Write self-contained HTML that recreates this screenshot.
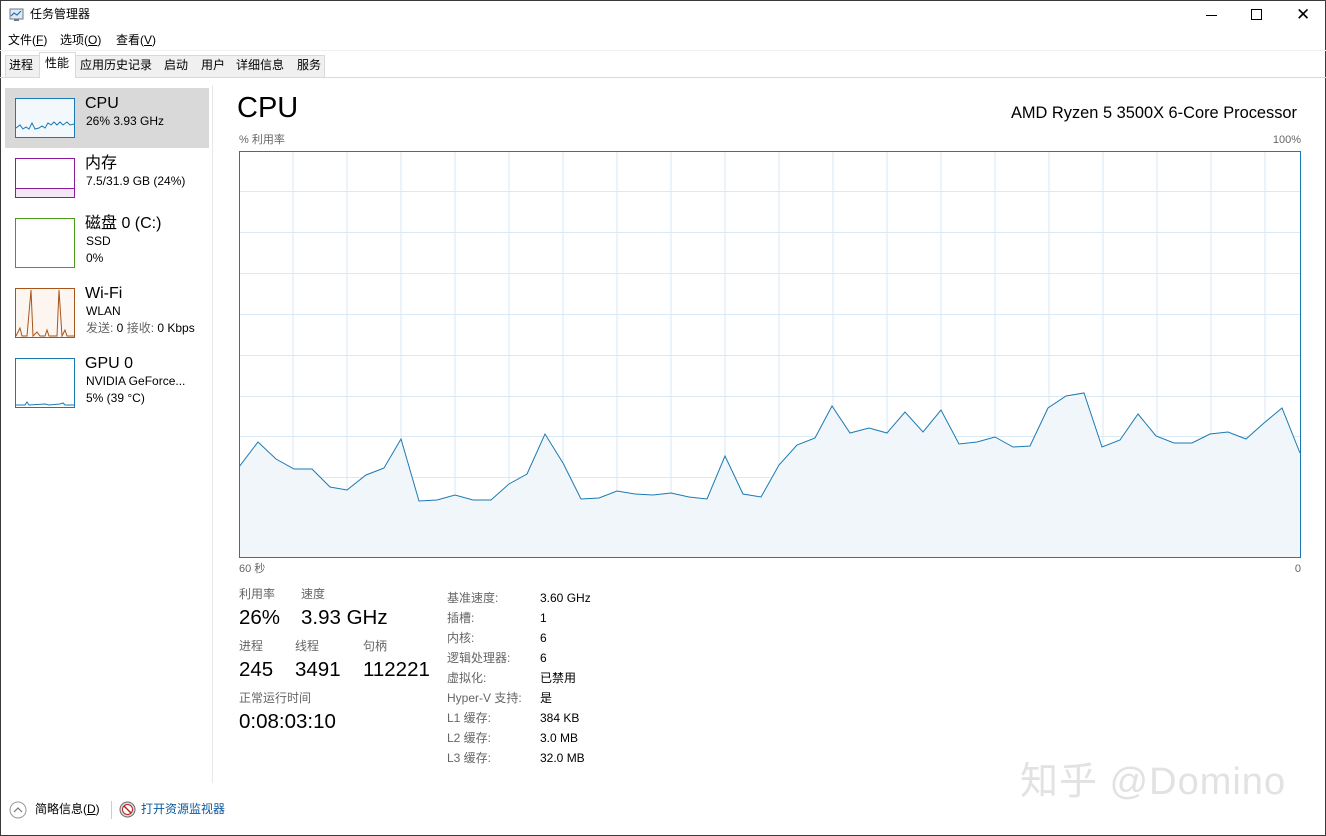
<!DOCTYPE html>
<html><head><meta charset="utf-8"><style>
*{margin:0;padding:0;box-sizing:border-box}
body{width:1326px;height:836px;background:#fff;position:relative;overflow:hidden;font-family:"Liberation Sans","Noto Sans CJK SC",sans-serif;color:#000}
.a{position:absolute;white-space:nowrap;line-height:1.15}
.g{color:#666}
</style></head><body>
<div class="a" style="left:0;top:0;width:1326px;height:836px;border:1px solid #3a3a3a"></div>
<svg class="a" style="left:9px;top:8px" width="16" height="14"><rect x="1" y="1" width="13" height="10" fill="#dfe9f3" stroke="#6a7b8c"/><polyline points="2,8 5,5 8,7 12,3" fill="none" stroke="#2a6cb0" stroke-width="1.2"/><rect x="5" y="11" width="5" height="2" fill="#6a7b8c"/></svg>
<div class="a" style="left:30px;top:8px;font-size:12px">任务管理器</div>
<div class="a" style="left:1206px;top:15px;width:11px;height:1px;background:#000"></div>
<div class="a" style="left:1251px;top:9px;width:11px;height:11px;border:1px solid #000"></div>
<div class="a" style="left:1296px;top:5px;font-size:17px;font-weight:300">✕</div>
<div class="a" style="left:8px;top:34px;font-size:12px">文件(<u>F</u>)</div>
<div class="a" style="left:60px;top:34px;font-size:12px">选项(<u>O</u>)</div>
<div class="a" style="left:116px;top:34px;font-size:12px">查看(<u>V</u>)</div>
<div class="a" style="left:0;top:50px;width:1326px;height:1px;background:#f0f0f0"></div>
<div class="a" style="left:0;top:77px;width:1326px;height:1px;background:#d9d9d9"></div>
<div class="a" style="left:5px;top:55px;width:320px;height:22px;background:#f0f0f0;border:1px solid #d9d9d9;border-bottom:none"></div>
<div class="a" style="left:39px;top:52px;width:37px;height:26px;background:#fff;border:1px solid #d9d9d9;border-bottom:none"></div>
<div class="a" style="left:9px;top:59px;font-size:12px">进程</div>
<div class="a" style="left:45px;top:57px;font-size:12px">性能</div>
<div class="a" style="left:80px;top:59px;font-size:12px">应用历史记录</div>
<div class="a" style="left:164px;top:59px;font-size:12px">启动</div>
<div class="a" style="left:201px;top:59px;font-size:12px">用户</div>
<div class="a" style="left:236px;top:59px;font-size:12px">详细信息</div>
<div class="a" style="left:297px;top:59px;font-size:12px">服务</div>
<div class="a" style="left:5px;top:88px;width:204px;height:60px;background:#d9d9d9"></div>
<div class="a" style="left:212px;top:85px;width:1px;height:698px;background:#e8e8e8"></div>
<svg class="a" style="left:15px;top:98px" width="60" height="40"><rect x="0.5" y="0.5" width="59" height="39" fill="#f3f8fc" stroke="#1a7ab3"/><polyline points="1,30 5,27 8,31 11,29 14,31 17,25 20,31 24,30 27,28 30,30 33,25 36,27 39,24 42,27 45,24 48,27 52,24 55,27 59,26" fill="none" stroke="#1a7ab3"/></svg>
<svg class="a" style="left:15px;top:158px" width="60" height="40"><rect x="0.5" y="0.5" width="59" height="39" fill="#fff" stroke="#8b1b9a"/><rect x="1" y="30" width="58" height="9" fill="#f3e6f5"/><line x1="1" y1="30.5" x2="59" y2="30.5" stroke="#8b1b9a"/></svg>
<svg class="a" style="left:15px;top:218px" width="60" height="50"><rect x="0.5" y="0.5" width="59" height="49" fill="#fff" stroke="#4d9a1b"/></svg>
<svg class="a" style="left:15px;top:288px" width="60" height="50"><rect x="0.5" y="0.5" width="59" height="49" fill="#fdf6f0" stroke="#a7541a"/><polyline points="1,48 5,40 7,48 12,48 16,2 18,48 22,44 25,48 30,48 32,42 34,48 42,48 44,2 47,48 50,42 52,48 59,48" fill="none" stroke="#a7541a"/></svg>
<svg class="a" style="left:15px;top:358px" width="60" height="50"><rect x="0.5" y="0.5" width="59" height="49" fill="#fff" stroke="#1a7ab3"/><polyline points="1,47 10,47 12,44 14,47 30,46 34,47 45,46 48,45 50,47 59,47" fill="none" stroke="#1a7ab3"/></svg>
<div class="a" style="left:85px;top:95px;font-size:16px">CPU</div>
<div class="a" style="left:86px;top:115px;font-size:12px">26% 3.93 GHz</div>
<div class="a" style="left:85px;top:155px;font-size:16px">内存</div>
<div class="a" style="left:86px;top:175px;font-size:12px">7.5/31.9 GB (24%)</div>
<div class="a" style="left:85px;top:215px;font-size:16px">磁盘 0 (C:)</div>
<div class="a" style="left:86px;top:235px;font-size:12px">SSD</div>
<div class="a" style="left:86px;top:252px;font-size:12px">0%</div>
<div class="a" style="left:85px;top:285px;font-size:16px">Wi-Fi</div>
<div class="a" style="left:86px;top:305px;font-size:12px">WLAN</div>
<div class="a" style="left:86px;top:322px;font-size:12px"><span class="g">发送:</span> 0 <span class="g">接收:</span> 0 Kbps</div>
<div class="a" style="left:85px;top:355px;font-size:16px">GPU 0</div>
<div class="a" style="left:86px;top:375px;font-size:12px">NVIDIA GeForce...</div>
<div class="a" style="left:86px;top:392px;font-size:12px">5% (39 °C)</div>
<div class="a" style="left:237px;top:92px;font-size:29px">CPU</div>
<div class="a" style="right:29px;top:104px;font-size:16.4px">AMD Ryzen 5 3500X 6-Core Processor</div>
<div class="a g" style="left:239px;top:134px;font-size:11px">% 利用率</div>
<div class="a g" style="right:25px;top:134px;font-size:11px">100%</div>
<svg class="a" style="left:239px;top:151px" width="1062" height="407">
<g stroke="#d9eaf4" stroke-width="1">
<line x1="54" y1="0" x2="54" y2="407"/><line x1="108" y1="0" x2="108" y2="407"/><line x1="162" y1="0" x2="162" y2="407"/><line x1="216" y1="0" x2="216" y2="407"/><line x1="270" y1="0" x2="270" y2="407"/><line x1="324" y1="0" x2="324" y2="407"/><line x1="378" y1="0" x2="378" y2="407"/><line x1="432" y1="0" x2="432" y2="407"/><line x1="486" y1="0" x2="486" y2="407"/><line x1="540" y1="0" x2="540" y2="407"/><line x1="594" y1="0" x2="594" y2="407"/><line x1="648" y1="0" x2="648" y2="407"/><line x1="702" y1="0" x2="702" y2="407"/><line x1="756" y1="0" x2="756" y2="407"/><line x1="810" y1="0" x2="810" y2="407"/><line x1="864" y1="0" x2="864" y2="407"/><line x1="918" y1="0" x2="918" y2="407"/><line x1="972" y1="0" x2="972" y2="407"/><line x1="1026" y1="0" x2="1026" y2="407"/>
<line x1="0" y1="40.5" x2="1062" y2="40.5"/><line x1="0" y1="81.5" x2="1062" y2="81.5"/><line x1="0" y1="122.5" x2="1062" y2="122.5"/><line x1="0" y1="163.5" x2="1062" y2="163.5"/><line x1="0" y1="204.5" x2="1062" y2="204.5"/><line x1="0" y1="245.5" x2="1062" y2="245.5"/><line x1="0" y1="285.5" x2="1062" y2="285.5"/><line x1="0" y1="326.5" x2="1062" y2="326.5"/><line x1="0" y1="367.5" x2="1062" y2="367.5"/>
</g>
<g transform="translate(-239,-151)">
<polygon fill="#f1f6fa" points="239,557 239,467 258,442 276,459 294,469 312,469 330,487 347,490 366,475 384,468 401,439 419,501 437,500 455,495 473,500 491,500 509,484 527,474 545,434 563,463 581,499 599,498 617,491 635,494 653,495 671,493 689,497 707,499 725,456 743,494 761,497 779,465 797,445 815,438 832,406 850,433 869,428 887,433 905,412 923,432 941,410 959,444 977,442 995,437 1013,447 1030,446 1048,408 1066,396 1084,393 1102,447 1120,440 1138,414 1156,436 1174,443 1192,443 1210,434 1228,432 1246,439 1264,423 1282,408 1300,453 1300,557"/>
<polyline fill="none" stroke="#1a7ab3" stroke-width="1" points="239,467 258,442 276,459 294,469 312,469 330,487 347,490 366,475 384,468 401,439 419,501 437,500 455,495 473,500 491,500 509,484 527,474 545,434 563,463 581,499 599,498 617,491 635,494 653,495 671,493 689,497 707,499 725,456 743,494 761,497 779,465 797,445 815,438 832,406 850,433 869,428 887,433 905,412 923,432 941,410 959,444 977,442 995,437 1013,447 1030,446 1048,408 1066,396 1084,393 1102,447 1120,440 1138,414 1156,436 1174,443 1192,443 1210,434 1228,432 1246,439 1264,423 1282,408 1300,453"/>
</g>
<rect x="0.5" y="0.5" width="1061" height="406" fill="none" stroke="#1a7ab3"/>
</svg>
<div class="a g" style="left:239px;top:563px;font-size:11px">60 秒</div>
<div class="a g" style="right:25px;top:563px;font-size:11px">0</div>
<div class="a g" style="left:239px;top:588px;font-size:12px">利用率</div>
<div class="a g" style="left:301px;top:588px;font-size:12px">速度</div>
<div class="a" style="left:239px;top:606px;font-size:20.5px">26%</div>
<div class="a" style="left:301px;top:606px;font-size:20.5px">3.93 GHz</div>
<div class="a g" style="left:239px;top:640px;font-size:12px">进程</div>
<div class="a g" style="left:295px;top:640px;font-size:12px">线程</div>
<div class="a g" style="left:363px;top:640px;font-size:12px">句柄</div>
<div class="a" style="left:239px;top:658px;font-size:20.5px">245</div>
<div class="a" style="left:295px;top:658px;font-size:20.5px">3491</div>
<div class="a" style="left:363px;top:658px;font-size:20.5px">112221</div>
<div class="a g" style="left:239px;top:692px;font-size:12px">正常运行时间</div>
<div class="a" style="left:239px;top:710px;font-size:20.5px">0:08:03:10</div>
<div class="a g" style="left:447px;top:588px;font-size:12px;line-height:20px">基准速度:<br>插槽:<br>内核:<br>逻辑处理器:<br>虚拟化:<br>Hyper-V 支持:<br>L1 缓存:<br>L2 缓存:<br>L3 缓存:</div>
<div class="a" style="left:540px;top:588px;font-size:12px;line-height:20px">3.60 GHz<br>1<br>6<br>6<br>已禁用<br>是<br>384 KB<br>3.0 MB<br>32.0 MB</div>
<div class="a" style="left:1020px;top:761px;font-size:38px;color:#e2e2e2;letter-spacing:1px">知乎 @Domino</div>
<svg class="a" style="left:9px;top:801px" width="18" height="18"><circle cx="9" cy="9" r="8" fill="none" stroke="#999"/><polyline points="5,11 9,7 13,11" fill="none" stroke="#777" stroke-width="1.2"/></svg>
<div class="a" style="left:35px;top:803px;font-size:12px">简略信息(<u>D</u>)</div>
<div class="a" style="left:111px;top:801px;width:1px;height:18px;background:#ccc"></div>
<svg class="a" style="left:119px;top:801px" width="17" height="17"><circle cx="8.5" cy="8.5" r="7.5" fill="#ddd" stroke="#666"/><circle cx="8.5" cy="8.5" r="5" fill="#fff" stroke="#b22"/><line x1="5" y1="5" x2="12" y2="12" stroke="#b22" stroke-width="1.5"/></svg>
<div class="a" style="left:141px;top:803px;font-size:12px;color:#0a5aa0">打开资源监视器</div>
</body></html>
